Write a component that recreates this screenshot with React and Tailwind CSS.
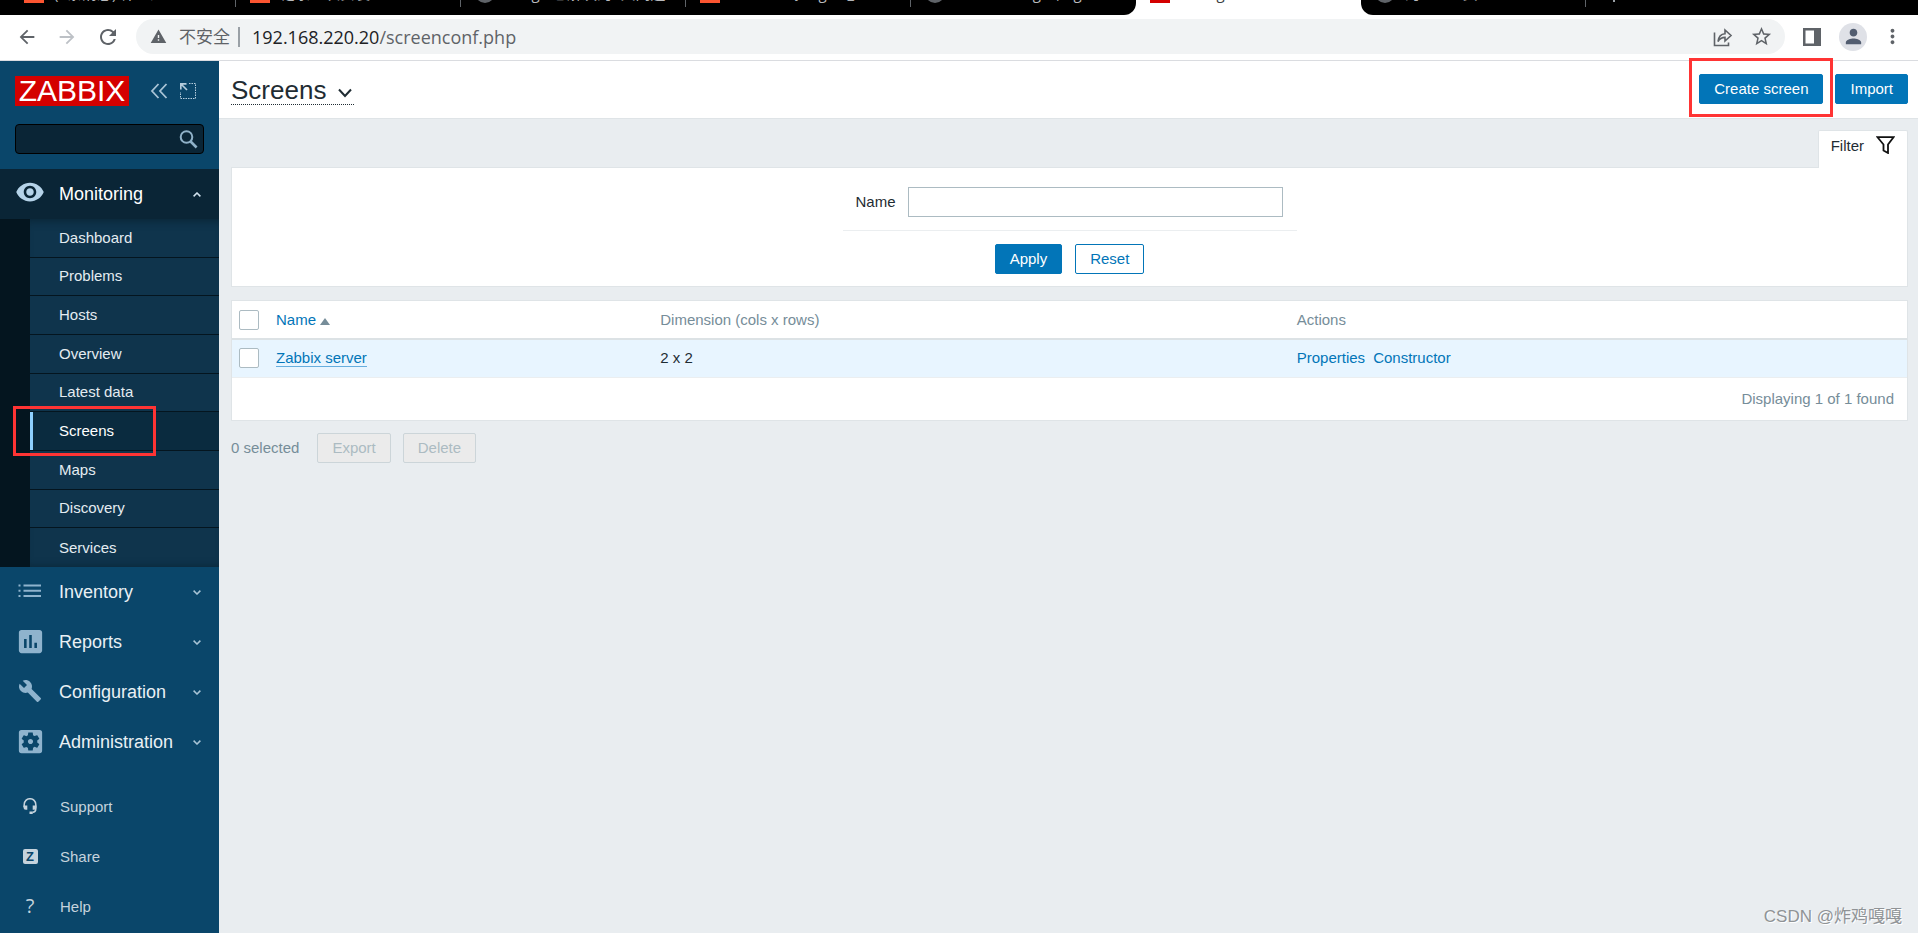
import React from "react";
import {
  MdArrowBack,
  MdArrowForward,
  MdRefresh,
  MdWarning,
  MdStarOutline,
  MdPerson,
  MdMoreVert,
  MdRemoveRedEye,
  MdAssessment,
  MdBuild,
  MdSettingsApplications,
} from "react-icons/md";

const tabs = [
  { icon: "c", title: "(4条消息) 什么是Stetatic" },
  { icon: "c", title: "记录一次安装-1011" },
  { icon: "dot", title: "Image 已解决的8大问题" },
  { icon: "c", title: "zabbix 监控nginx_1" },
  { icon: "dot", title: "docker images, nginx" },
  { icon: "z", title: "Configuration of screens", active: true },
  { icon: "dot", title: "的vivo主页人" },
];

function Favicon({ kind }) {
  if (kind === "c")
    return (
      <span className="flex size-5 shrink-0 items-end justify-center overflow-hidden bg-[#fc5531]">
        <span className="mb-1 h-3 w-2.5 rounded-full border-2 border-white" />
      </span>
    );
  if (kind === "z") return <span className="size-5 shrink-0 bg-[#d40000]" />;
  return <span className="size-5 shrink-0 rounded-full bg-[#5f6368]" />;
}

function TabStrip() {
  return (
    <div className="flex h-[15px] items-end overflow-hidden bg-white">
      {tabs.map((tab, i) => {
        const before = tabs[i + 1]?.active;
        const after = tabs[i - 1]?.active;
        return (
          <div
            key={tab.title}
            className={`flex h-10 items-end ${i === 0 ? "w-[236px] pl-2.5" : "w-[225px]"} shrink-0 ${
              tab.active ? "bg-white" : "bg-black"
            } ${before ? "rounded-br-xl" : ""} ${after ? "rounded-bl-xl" : ""}`}
          >
            <div
              className={`mb-2 flex h-8 grow items-end border-r ${
                tab.active || before ? "border-transparent" : "border-[#5f6368]"
              }`}
            >
              <div className="mb-1 flex items-center gap-2.5 pl-3.5">
                <Favicon kind={tab.icon} />
                <span
                  className={`w-[165px] text-[15px] leading-5 whitespace-nowrap ${
                    tab.active ? "text-[#3c4043]" : "text-[#b8babd]"
                  }`}
                >
                  {tab.title}
                </span>
              </div>
            </div>
          </div>
        );
      })}
      <div className="flex h-10 grow items-end bg-black pb-3 pl-5 text-[#9aa0a6]">
        <svg className="size-4" viewBox="0 0 16 16" fill="none" stroke="currentColor" strokeWidth="2">
          <path d="M8 1v14M1 8h14" />
        </svg>
      </div>
    </div>
  );
}

function Toolbar() {
  return (
    <div className="flex h-[46px] items-center border-b border-[#dadce0] bg-white pr-3.5 pb-0.5 pl-4 text-[#5f6368]">
      <button aria-label="Back" className="mr-[18px]"><MdArrowBack size={22} /></button>
      <button aria-label="Forward" className="mr-[18px] text-[#bdc1c6]"><MdArrowForward size={22} /></button>
      <button aria-label="Reload" className="mr-4"><MdRefresh size={24} /></button>
      <div className="flex h-[35px] grow items-center rounded-full bg-[#f1f3f4] pr-3 pl-3.5">
        <MdWarning size={17} />
        <span className="ml-3 text-[17px] leading-6">不安全</span>
        <span className="mx-2 h-5 w-0.5 bg-[#9aa0a6]" />
        <span className="grow pl-1 text-[18px] leading-6"><span className="text-[#202124]">192.168.220.20</span>/screenconf.php</span>
        <button aria-label="Share page" className="mr-4">
          <svg width="22" height="22" viewBox="0 0 22 22" fill="none" stroke="currentColor" strokeWidth="1.6">
            <path d="M2.500 6.500v13h14V16.500" />
            <path d="M6 15.500c.6-4.800 3-7.400 7-7.700V4l6 5.500-6 5.500v-3.600c-3.300 0-5.400 1.200-7 4.100z" />
          </svg>
        </button>
        <button aria-label="Bookmark"><MdStarOutline size={23} /></button>
      </div>
      <button aria-label="Side panel" className="ml-[18px]">
        <svg width="18" height="18" viewBox="0 0 18 18" fill="currentColor">
          <path fillRule="evenodd" d="M0 0h18v18H0zM2.500 2.500v13h8.500v-13z" />
        </svg>
      </button>
      <button aria-label="Profile" className="mr-3.5 ml-[18px] flex size-7 items-center justify-center rounded-full bg-[#dfe1e7] text-[#525d70]">
        <MdPerson size={23} />
      </button>
      <button aria-label="More"><MdMoreVert size={23} /></button>
    </div>
  );
}

function Chevron({ up, className }) {
  return (
    <svg className={className} width="8" height="5" viewBox="0 0 8 5" fill="none" stroke="currentColor" strokeWidth="1.500">
      <path d={up ? "M.6 4.400 4 1l3.400 3.400" : "M.6.6 4 4 7.400.6"} />
    </svg>
  );
}

function ListIcon() {
  return (
    <svg width="24" height="14" viewBox="0 0 24 14" fill="currentColor">
      <path d="M.5.500h2v2h-2zM5.500.500H23v2H5.500zM.5 5.800h2v2h-2zM5.500 5.800H23v2H5.500zM.5 11h2v2h-2zM5.500 11H23v2H5.500z" />
    </svg>
  );
}

function SupportIcon() {
  return (
    <svg width="14" height="16" viewBox="0 0 14 16" fill="none" stroke="currentColor">
      <path d="M1.200 9V6.500a5.800 5.800 0 0 1 11.600 0V11c0 2-1.300 3.200-3.300 3.400" strokeWidth="1.500" />
      <path d="M.5 7.500h3.800v4.300H2.800A2.300 2.300 0 0 1 .5 9.500zM9.700 7.500h3.800v2a2.300 2.300 0 0 1-2.300 2.300H9.700zM6.500 13.500h3.200V16H6.500z" fill="currentColor" stroke="none" />
    </svg>
  );
}

const subItems = ["Dashboard", "Problems", "Hosts", "Overview", "Latest data", "Screens", "Maps", "Discovery", "Services"];

const sections = [
  { label: "Inventory", icon: <ListIcon /> },
  { label: "Reports", icon: <MdAssessment size={31} /> },
  { label: "Configuration", icon: <MdBuild size={24} /> },
  { label: "Administration", icon: <MdSettingsApplications size={31} /> },
];

const footerLinks = [
  { label: "Support", icon: <SupportIcon /> },
  { label: "Share", icon: <span className="flex size-[15px] items-center justify-center rounded-xs bg-current text-[13px] leading-none font-bold"><span className="text-[#0a466a]">Z</span></span> },
  { label: "Help", icon: <span className="font-['Open_Sans',sans-serif] text-[20px] leading-none font-medium">?</span> },
];

function Sidebar() {
  return (
    <aside className="w-[219px] shrink-0 bg-[#0a466a]">
      <div className="flex items-center px-[15px] pt-[15px]">
        <a href="#" className="flex h-[30px] w-[114px] items-center justify-center bg-[#d40000] text-[30px] leading-none text-white">ZABBIX</a>
        <button aria-label="Collapse sidebar" className="ml-[21px] text-[#a9c4d6]">
          <svg width="18" height="16" viewBox="0 0 18 16" fill="none" stroke="currentColor" strokeWidth="1.800">
            <path d="M8.500 1 2 8l6.500 7M16.500 1 10 8l6.500 7" />
          </svg>
        </button>
        <button aria-label="Hide sidebar" className="ml-3 text-[#b5cddd]">
          <svg width="16" height="16" viewBox="0 0 16 16" fill="none" stroke="currentColor">
            <path d="M9 .5h6.500v15H.5V9" strokeDasharray="1.500 1" strokeWidth="1" />
            <path d="M.8 6.500V.8h5.700M1 1l6 6" strokeWidth="1.700" />
          </svg>
        </button>
      </div>
      <form className="mx-[15px] mt-[18px] mb-[15px] flex h-[30px] items-center rounded-sm border border-black bg-[#0a2536]">
        <input aria-label="Search" type="text" className="h-full min-w-0 grow bg-transparent px-2 text-[15px] text-white outline-none" />
        <button type="button" aria-label="Run search" className="mr-[5px] text-[#8fb1c8]">
          <svg width="19" height="19" viewBox="0 0 19 19" fill="none" stroke="currentColor">
            <circle cx="7.500" cy="7" r="5.800" strokeWidth="2" />
            <path d="m11.600 11.500 6 6" strokeWidth="2.600" />
          </svg>
        </button>
      </form>
      <nav>
        <button className="flex h-[50px] w-full items-center bg-[#0a2536] text-left">
          <span className="flex w-[59px] justify-center pb-1 text-[#b5d3e9]"><MdRemoveRedEye size={30} /></span>
          <span className="grow text-[18px] leading-6 text-white">Monitoring</span>
          <Chevron up className="mr-[18px] text-[#d3e4f0]" />
        </button>
        <ul className="grid h-[348px] auto-rows-fr bg-[#04151f] pl-[30px]">
          {subItems.map((item, i) => {
            const on = item === "Screens";
            return (
              <li key={item} className="relative flex border-b border-[#04151f] last:border-b-0">
                <a
                  href="#"
                  className={`flex grow items-center text-[15px] leading-5 ${
                    on ? "border-l-3 border-[#8ed0ff] bg-[#0a2b3f] pl-[26px] text-white" : "bg-[#0f344c] pl-[29px] text-[#e4ecf1]"
                  } ${i === 0 ? "shadow-[inset_0_8px_8px_-6px_#0a2536]" : ""} ${
                    i === 8 ? "shadow-[inset_0_-6px_8px_-6px_#0a2536]" : ""
                  }`}
                >
                  {item}
                </a>
                {on && <span className="pointer-events-none absolute -top-[6px] -left-[17px] z-10 h-[50px] w-[143px] border-3 border-[#ff3434]" />}
              </li>
            );
          })}
        </ul>
        {sections.map((s) => (
          <button key={s.label} className="flex h-[50px] w-full items-center text-left">
            <span className="flex w-[60px] justify-center pb-0.5 text-[#8fb3cd]">{s.icon}</span>
            <span className="-ml-px grow text-[18px] leading-6 text-[#e9f0f4]">{s.label}</span>
            <Chevron className="mr-[18px] text-[#a9c4d6]" />
          </button>
        ))}
      </nav>
      <nav className="pt-[15px]">
        {footerLinks.map((l) => (
          <a key={l.label} href="#" className="flex h-[50px] items-center text-[15px] leading-5 text-[#c5d3dd]">
            <span className="flex w-[60px] justify-center pb-0.5">{l.icon}</span>
            {l.label}
          </a>
        ))}
      </nav>
    </aside>
  );
}

const primary = "h-[30px] rounded-xs border border-[#0275b8] bg-[#0275b8] px-3.5 text-[15px] leading-5 text-white";
const disabled = "h-[30px] rounded-xs border border-[#ccd5d9] bg-[#ebebeb] px-3.5 text-[15px] leading-5 text-[#acbbc2]";
const checkbox = "block size-5 appearance-none rounded-xs border border-[#acbbc2] bg-white";

function Main() {
  return (
    <main className="min-w-0 grow bg-[#e9edf0] text-[15px] leading-5 text-[#1f2c33]">
      <header className="flex h-[58px] items-start justify-between border-b border-[#dfe4e7] bg-white px-3 pr-2.5">
        <h1 className="mt-[15px]">
          <button className="flex items-center border-b border-dotted border-[#1f2c33] text-[26px] leading-7">
            Screens
            <svg className="mt-1.5 mr-0.5 ml-3" width="14" height="10" viewBox="0 0 14 10" fill="none" stroke="currentColor" strokeWidth="2">
              <path d="m1 1.500 6 6.500 6-6.500" />
            </svg>
          </button>
        </h1>
        <div className="mt-[13px] flex gap-3">
          <div className="relative">
            <button className={primary}>Create screen</button>
            <span className="pointer-events-none absolute -inset-x-[10px] -top-4 -bottom-[13px] z-10 border-3 border-[#ff3434]" />
          </div>
          <button className={primary}>Import</button>
        </div>
      </header>

      <div className="pt-[11px] pr-2.5 pl-3">
        <div className="flex justify-end">
          <button className="relative -mb-px flex h-[38px] items-start gap-3 rounded-t-xs border border-b-0 border-[#dfe4e7] bg-white px-3 pt-[5px]">
            Filter
            <svg width="19" height="18" viewBox="0 0 19 18" fill="none" stroke="#111" strokeWidth="1.800">
              <path d="M1.500 1.200h16L12 8.500V17l-4.500-2.500v-6z" />
            </svg>
          </button>
        </div>
        <form className="flex flex-col items-center border border-[#dfe4e7] bg-white pt-[19px] pb-3">
          <div className="flex w-[454px] items-center gap-3 border-b border-[#ebeef0] pb-[13px] pl-[13px]">
            <label htmlFor="filter-name">Name</label>
            <input id="filter-name" type="text" className="h-[30px] w-[375px] border border-[#acbbc2] bg-white px-1.5 outline-none" />
          </div>
          <div className="flex gap-[13px] pt-[13px]">
            <button type="button" className={primary}>Apply</button>
            <button type="button" className="h-[30px] rounded-xs border border-[#0275b8] bg-white px-3.5 text-[#0275b8]">Reset</button>
          </div>
        </form>

        <div className="mt-[13px] border border-[#dfe4e7] bg-white">
          <table className="w-full table-fixed border-collapse text-left">
            <thead>
              <tr className="h-[38px] border-b-2 border-[#dce2e5] text-[#768d99]">
                <th className="w-[39px] pl-[7px]"><input type="checkbox" aria-label="Select all" className={checkbox} /></th>
                <th className="w-[23%] px-[5px] font-normal">
                  <a href="#" className="inline-flex items-center gap-1 text-[#0275b8]">
                    Name
                    <svg className="mt-1" width="10" height="7" viewBox="0 0 10 7"><path d="M5 0l5 7H0z" fill="#768d99" /></svg>
                  </a>
                </th>
                <th className="w-[38%] px-1 font-normal">Dimension (cols x rows)</th>
                <th className="px-1 font-normal">Actions</th>
              </tr>
            </thead>
            <tbody>
              <tr className="h-[38px] border-b border-[#ebeef0] bg-[#e8f5ff]">
                <td className="pl-[7px]"><input type="checkbox" aria-label="Select Zabbix server" className={checkbox} /></td>
                <td className="px-[5px]"><a href="#" className="border-b border-[#67aede] text-[#0275b8]">Zabbix server</a></td>
                <td className="px-1">2 x 2</td>
                <td className="px-1 text-[#0275b8]">
                  <span className="flex gap-2"><a href="#">Properties</a><a href="#">Constructor</a></span>
                </td>
              </tr>
            </tbody>
          </table>
          <div className="px-[13px] py-[11px] text-right text-[#768d99]">Displaying 1 of 1 found</div>
        </div>

        <div className="mt-3 flex items-center text-[#768d99]">
          <span className="mr-[18px]">0 selected</span>
          <button disabled className={`${disabled} mr-3`}>Export</button>
          <button disabled className={disabled}>Delete</button>
        </div>
      </div>
    </main>
  );
}

export default function App() {
  return (
    <div className="relative flex min-h-screen flex-col overflow-hidden bg-white font-['Liberation_Sans','Noto_Sans_CJK_SC',sans-serif]">
      <div className="font-['Open_Sans','Noto_Sans_CJK_SC',sans-serif]">
        <TabStrip />
        <Toolbar />
      </div>
      <div className="flex grow">
        <Sidebar />
        <Main />
      </div>
      <div className="absolute right-4 bottom-1 text-[17px] leading-6 text-[#8f9396] [text-shadow:1px_1px_0_#fff]">CSDN @炸鸡嘎嘎</div>
    </div>
  );
}
